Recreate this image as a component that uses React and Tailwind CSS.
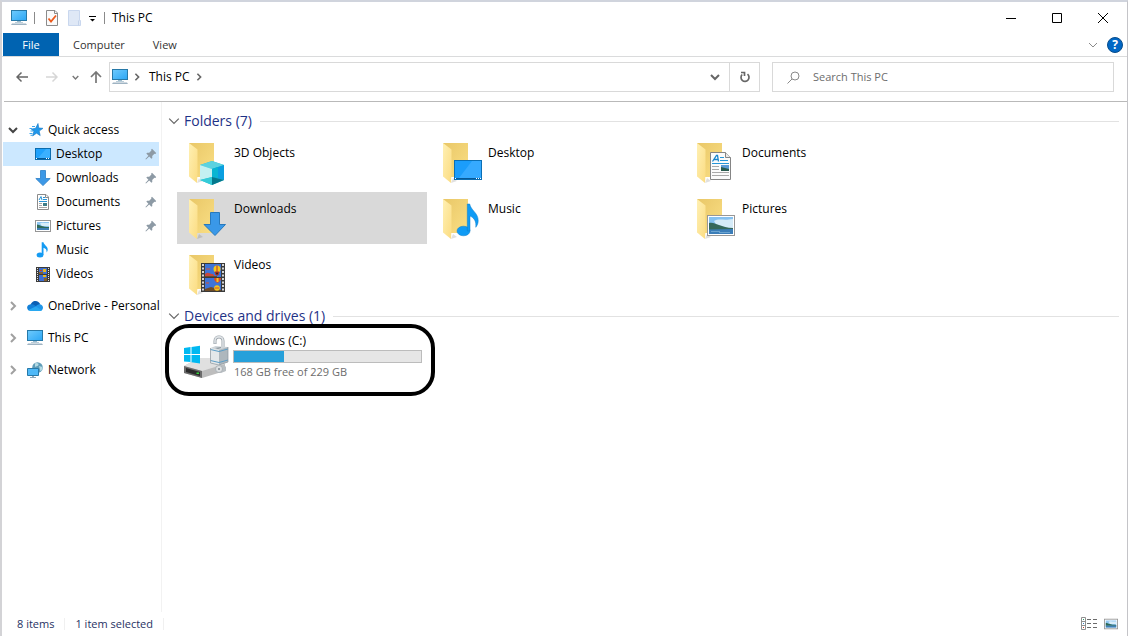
import React from "react";

/* ---------- small icons ---------- */

function Chevron({ dir = "down", className = "" }) {
  const d = dir === "down" ? "M1 3 5 7 9 3" : "M3 1 7 5 3 9";
  return (
    <svg viewBox="0 0 10 10" fill="none" stroke="currentColor" className={`shrink-0 ${className}`} aria-hidden="true">
      <path d={d} />
    </svg>
  );
}

function PcIcon() {
  return (
    <svg viewBox="0 0 16 16" className="w-4 h-4 shrink-0" aria-hidden="true">
      <defs>
        <linearGradient id="pc" x1="0" y1="0" x2="1" y2="1">
          <stop offset="0" stopColor="#6fcbfd" />
          <stop offset="1" stopColor="#2ba6f5" />
        </linearGradient>
      </defs>
      <rect x="0.5" y="0.5" width="15" height="10" fill="url(#pc)" stroke="#2779a8" />
      <path d="M6 11h4v1H6z" fill="#9dbccd" />
      <path d="M4 12h8v1H4z" fill="#b9cdd9" />
      <path d="M1 13.5h14l1 1.5H0z" fill="#9fb4c3" />
    </svg>
  );
}

function StarIcon() {
  return (
    <svg viewBox="0 0 16 16" className="w-4 h-4 shrink-0" aria-hidden="true">
      <path d="M10 1.5 10.8 6 15 6.3 11.2 9.1 12.2 13.6 8.5 11.2 4.6 14 5.8 9.6 3.4 7.1 7.6 6.3z" fill="#1f97ea" stroke="#1579c4" strokeWidth="0.6" />
      <path d="M4 4.5h3M1.5 6.5H4M2.5 9H5M1.5 11.5h3M2.5 13.3h2" stroke="#3ba5ec" />
    </svg>
  );
}

function DesktopIcon() {
  return (
    <svg viewBox="0 0 16 16" className="w-4 h-4 shrink-0" aria-hidden="true">
      <rect x="0.5" y="2.5" width="15" height="11" fill="#1fa1fc" stroke="#0b6cae" />
      <path d="M3 12 11 3h4v9z" fill="#3bb0ff" />
      <path d="M1 12.5h14" stroke="#075a98" />
      <path d="M1 12.5h1M11 12.5h1M13 12.5h1" stroke="#fff" />
    </svg>
  );
}

function DownloadIcon() {
  return (
    <svg viewBox="0 0 16 16" className="w-4 h-4 shrink-0" aria-hidden="true">
      <path d="M5.5.5h5v8h4.7L8 15.6.8 8.5h4.7z" fill="#3c98e6" stroke="#2a7dc6" strokeWidth="0.8" />
    </svg>
  );
}

function DocumentIcon() {
  return (
    <svg viewBox="0 0 16 16" className="w-4 h-4 shrink-0" aria-hidden="true">
      <path d="M2.5.5H11L13.5 3v12.5h-11z" fill="#fff" stroke="#8b8b8b" />
      <path d="M10.5.5v3h3" fill="none" stroke="#8b8b8b" />
      <path d="M4 6 6 2.5 7 6M8 3.5h2M8 5.5h4M4 7.5h8" fill="none" stroke="#2793d6" />
      <path d="M4 9.5h3M4 11.5h3M4 13.5h8" stroke="#a5a5a5" />
      <path d="M8 9h4v3H8z" fill="#3d7d88" />
    </svg>
  );
}

function PictureIcon({ className = "w-4 h-4" }) {
  return (
    <svg viewBox="0 0 16 16" className={`shrink-0 ${className}`} aria-hidden="true">
      <rect x="0.5" y="2.5" width="15" height="11" fill="#fff" stroke="#969696" />
      <path d="M2 4h12v8H2z" fill="#8fc6f2" />
      <path d="M5 5.5c2-1.5 4 0 9-.5v3H7z" fill="#d9edf9" />
      <path d="M2 6.500c3 .5 5 2.500 12 2.500v1H2z" fill="#2f6a58" />
      <path d="M2 10h12v2H2z" fill="#3f7fb5" />
    </svg>
  );
}

function MusicIcon() {
  return (
    <svg viewBox="0 0 16 16" className="w-4 h-4 shrink-0" aria-hidden="true">
      <ellipse cx="5" cy="13" rx="3.4" ry="2.5" fill="#149bf3" />
      <path d="M6.700.3h1.800c.3 2.600 4.300 4 4.200 7.200 0 1.200-.4 2-1.100 2.900.3-2.600-.9-3.900-3.100-4.600V13H6.700z" fill="#149bf3" />
    </svg>
  );
}

function VideoIcon() {
  return (
    <svg viewBox="0 0 16 16" className="w-4 h-4 shrink-0" aria-hidden="true">
      <path d="M1 1h14v15H1z" fill="#3b3b3b" />
      <path d="M2.500 2v14M13.500 2v14" stroke="#e2e2e2" strokeDasharray="1 1" />
      <path d="M4 2h8v6H4zM4 9h8v6H4z" fill="#3f6fd0" />
      <path d="M8 3h3v3H8zM8 9h3v2H8z" fill="#e9b81f" />
      <path d="M4 6h4v2H4zM9 12h3v3H9z" fill="#86602d" />
      <path d="M5 4h2v1H5z" fill="#c5402c" />
    </svg>
  );
}

function CloudIcon() {
  return (
    <svg viewBox="0 0 16 16" className="w-4 h-4 shrink-0" aria-hidden="true">
      <path d="M3 8.500C3.500 5 6 3 8.500 3c2.200 0 4 1.300 4.700 3.300L9 9z" fill="#0a5fb4" />
      <path d="M3.300 6.500C5 6 6.500 6.500 8 7.400L11 9.500 2 12.600C-1 10.500-.3 6.800 3.300 6.500z" fill="#1480d8" />
      <path d="M8.500 8.800c1-1.800 2.600-2.700 4.500-2.600 1.800.2 3 1.700 3 3.400 0 2-1.400 3.400-3.200 3.400H6z" fill="#2196e8" />
      <path d="M1.300 12 8.700 8.600 15 12.200c-.6.5-1.300.8-2.200.8H3.500c-.9 0-1.600-.3-2.200-1z" fill="#29a8f0" />
    </svg>
  );
}

function NetworkIcon() {
  return (
    <svg viewBox="0 0 16 16" className="w-4 h-4 shrink-0" aria-hidden="true">
      <circle cx="10.5" cy="5.5" r="5.3" fill="#5f9cb8" />
      <path d="M8 1.500c2-1 4 0 3.500 1.500S9 4 8 5zM12 4l3.500 1c0 2-1 4-2 4.500z" fill="#b5dbe4" />
      <path d="M.5 6.500h11v7H.5z" fill="#4fb9f8" stroke="#2779a8" />
      <path d="M5 14h2v1H5z" fill="#8fa9bb" />
      <path d="M3 15.500h6" stroke="#8fa9bb" />
    </svg>
  );
}

function PinIcon() {
  return (
    <svg viewBox="0 0 12 12" className="w-3 h-3 shrink-0 text-[#8d9aa5]" aria-hidden="true">
      <path d="M7 .8 11.200 5l-.8.9-1-.2-2.200 2.200.1 2-.9.9L4.200 8.600 1 11.600l-.6-.6L3.400 7.800 1.300 5.600l.9-.9 2 .1L6.400 2.600l-.2-1z" fill="currentColor" />
    </svg>
  );
}

/* ---------- 48px tile icons ---------- */

function Folder({ children }) {
  return (
    <svg viewBox="0 0 48 48" className="w-12 h-12 shrink-0" aria-hidden="true">
      <defs>
        <linearGradient id="fback" x1="0" y1="0" x2="1" y2="1">
          <stop offset="0" stopColor="#e9c767" />
          <stop offset="1" stopColor="#fadf85" />
        </linearGradient>
        <linearGradient id="fflap" x1="0" y1="0" x2="1" y2="1">
          <stop offset="0" stopColor="#fff0b3" />
          <stop offset="1" stopColor="#fbdc82" />
        </linearGradient>
      </defs>
      <path d="M16 45l6-2-4-3z" fill="#000" opacity="0.12" />
      <path d="M8 5h25v34H14z" fill="url(#fback)" />
      <path d="M8 5l8.500 6.500v24L16 45l-8-6.500z" fill="url(#fflap)" />
      {children}
    </svg>
  );
}

function ObjectsFolder() {
  return (
    <Folder>
      <path d="M17 39h28l-3 4-11 4-12-5z" fill="#fff" opacity="0.8" />
      <path d="M31 23l12 4v15l-12 5-12-5V27z" fill="#23bfd3" />
      <path d="M31 23l12 4-12 4-12-4z" fill="#5bd2e0" />
      <path d="M19 27l12 4v8l-12 3z" fill="#c4f0f2" />
      <path d="M31 31l12-4v15l-12-3z" fill="#0a9fe0" />
      <path d="M31 31l6-2v11l-6-1z" fill="#08b5d2" />
      <path d="M31 39l12 3-12 5z" fill="#05788c" />
      <path d="M19 42l12-3v8z" fill="#35cbd8" />
    </Folder>
  );
}

function DesktopFolder() {
  return (
    <Folder>
      <rect x="19.5" y="22.5" width="27" height="19" fill="#1b9dfb" stroke="#0b6fb5" />
      <path d="M24 40 37 23h9v17z" fill="#36aaff" />
      <path d="M20 40.500h26" stroke="#075a98" />
      <path d="M20 40.500h1M41 40.500h1M43 40.500h1M45 40.500h1" stroke="#fff" />
    </Folder>
  );
}

function DocumentsFolder() {
  return (
    <Folder>
      <path d="M21.500 14.500h15l5 5v22h-20z" fill="#fbfbfb" stroke="#858585" />
      <path d="M36.500 14.500v5h5" fill="#e9e9e9" stroke="#858585" />
      <path d="M23.500 23.500l4-6h1l1 6M25 21.500h4" fill="none" stroke="#1886cd" strokeWidth="1.3" />
      <path d="M31 19.500h4M31 22.500h8M23 25.500h17" stroke="#2796d9" />
      <path d="M23 28.500h7M23 31.500h7M23 34.500h17M23 37.500h17" stroke="#a9a9a9" />
      <path d="M32 27h8v6h-8z" fill="#5c9bd6" />
      <path d="M32 29l8 2v2h-8z" fill="#285a4e" />
    </Folder>
  );
}

function DownloadsFolder() {
  return (
    <Folder>
      <path d="M29.500 18.500h9v12h6L34 41.500 23 30.500h6.500z" fill="#3a98e8" stroke="#2779bd" />
    </Folder>
  );
}

function MusicFolder() {
  return (
    <Folder>
      <ellipse cx="28.5" cy="37" rx="6.5" ry="4.8" fill="#0f9bf5" stroke="#0c7fcb" strokeWidth="0.5" />
      <path d="M32.300 10h2.400c1 6 8.500 9 8.500 16.500 0 2.800-.8 4.700-2.400 6.800.6-5.800-1.500-9.300-5.800-11.300V37h-2.700z" fill="#0f9bf5" stroke="#0c7fcb" strokeWidth="0.5" />
    </Folder>
  );
}

function PicturesFolder() {
  return (
    <Folder>
      <rect x="18.5" y="21.5" width="27" height="20" fill="#fff" stroke="#979797" />
      <path d="M20 23h24v17H20z" fill="#85c1f0" />
      <path d="M25 27c5-3 9 0 19-2v9H29z" fill="#d5ebf8" />
      <path d="M20 29c4-1 6 1 10 2s8 3 14 3v2H20z" fill="#35685a" />
      <path d="M20 35.500l24-.5v5H20z" fill="#3b7db8" />
      <path d="M22 37.500h9M30 38.500h11" stroke="#79aed6" strokeWidth="0.8" />
    </Folder>
  );
}

function VideosFolder() {
  return (
    <Folder>
      <path d="M20 13h24v29H20z" fill="#3a3a3a" />
      <path d="M22 14v28M42 14v28" stroke="#d6d6d6" strokeWidth="2" strokeDasharray="2 1.5" />
      <path d="M24 14h16v13H24zM24 28h16v13H24z" fill="#3e74d6" />
      <path d="M24 24c3-3 5 0 8 0l2 3H24z" fill="#c8483d" />
      <path d="M24 26h12v1H24zM24 39l6-2 10 3v1H24z" fill="#6d4b27" />
      <circle cx="36" cy="19" r="3.5" fill="#f3c51c" />
      <path d="M36 15.500v7M34 22h4l-1 3h-2z" stroke="#bd3324" fill="#2a2a2a" />
      <path d="M33 28h7c0 3-2 4-3.500 5C35 32 33 31 33 28z" fill="#d94a28" />
      <path d="M35.500 28h2v4h-2z" fill="#efc520" />
      <circle cx="36" cy="38" r="2.8" fill="#f3c51c" />
      <path d="M25 19h4M25 33h3M34 38h4" stroke="#d9512b" />
    </Folder>
  );
}

function DriveIcon() {
  return (
    <svg viewBox="0 0 48 48" className="w-12 h-12 shrink-0" aria-hidden="true">
      <path d="M3 35 18 27h14l12 6v7L21 47 3 42z" fill="#bdbdbd" />
      <path d="M3 35 18 27h14l12 6-23 7z" fill="#e0e0e0" />
      <path d="M3 35l18 5v7L3 42z" fill="#6b6b6b" />
      <path d="M5 37l14 4v4L5 41z" fill="#2b2b2b" />
      <path d="M15.500 41.500H18V43h-2.500z" fill="#36d43b" />
      <path d="M3 17l6.500-1v7H3zM10.500 16l8.500-1.300V23h-8.500zM3 24h6.500v7L3 30.500zM10.500 24H19v8.500l-8.500-1.300z" fill="#00b8f1" />
      <path d="M34 13v-3c0-5.500 8-5.500 8 0v6" fill="none" stroke="#98a1a8" strokeWidth="3" />
      <path d="M34 12.500V10c0-5.500 8-5.500 8 0v6" fill="none" stroke="#dfe3e6" strokeWidth="1.600" />
      <path d="M29.500 17l5-2 12.500 1v15l-9 3-8.500-2z" fill="#cfd5d9" />
      <path d="M29.500 17l8.500 2v15l-8.500-2z" fill="#e4e8ea" />
      <path d="M38 19l9-3v15l-9 3z" fill="#aeb7bd" />
      <path d="M34 17l6-1v1l-3 1z" fill="#8e989f" />
      <path d="M29.500 18.500l8.500 2 9-2.500M29.500 29.500l8.500 2 9-2.500" fill="none" stroke="#5b9dc6" />
      <path d="M29.500 17v15l8.500 2 9-3V16" fill="none" stroke="#8c969e" strokeWidth="0.7" />
      <path d="M34 36l9-2 2 2v4l-5 2-6-2z" fill="#b9bfc3" />
      <circle cx="38" cy="38" r="3.5" fill="#dde0e2" stroke="#9da5ab" strokeWidth="0.7" />
      <circle cx="38" cy="38" r="1" fill="#7a848c" />
    </svg>
  );
}

/* ---------- data ---------- */

const quickItems = [
  { name: "Desktop", icon: <DesktopIcon />, pinned: true, active: true },
  { name: "Downloads", icon: <DownloadIcon />, pinned: true },
  { name: "Documents", icon: <DocumentIcon />, pinned: true },
  { name: "Pictures", icon: <PictureIcon />, pinned: true },
  { name: "Music", icon: <MusicIcon /> },
  { name: "Videos", icon: <VideoIcon /> },
];

const roots = [
  { name: "OneDrive - Personal", icon: <CloudIcon /> },
  { name: "This PC", icon: <PcIcon /> },
  { name: "Network", icon: <NetworkIcon /> },
];

const folders = [
  { name: "3D Objects", icon: <ObjectsFolder /> },
  { name: "Desktop", icon: <DesktopFolder /> },
  { name: "Documents", icon: <DocumentsFolder /> },
  { name: "Downloads", icon: <DownloadsFolder />, selected: true },
  { name: "Music", icon: <MusicFolder /> },
  { name: "Pictures", icon: <PicturesFolder /> },
  { name: "Videos", icon: <VideosFolder /> },
];

const drive = { name: "Windows (C:)", free: 168, total: 229 };

/* ---------- sections ---------- */

function TitleBar() {
  return (
    <header className="flex items-center h-[31px] pl-[9px] pr-px">
      <div className="flex items-center flex-1">
        <PcIcon />
        <span className="w-px h-3 ml-[7px] bg-[#8a8a8a]"></span>
        <button aria-label="Properties" className="ml-[9px]">
          <svg viewBox="0 0 16 16" className="w-4 h-4">
            <path d="M2.500.5H11L13.500 3v12.500h-11z" fill="#fafafa" stroke="#8b8b8b" />
            <path d="M10.500.5v3h3" fill="none" stroke="#8b8b8b" />
            <path d="M4.500 8.500 7 11.500l5-6" fill="none" stroke="#ec5a1c" strokeWidth="1.8" />
          </svg>
        </button>
        <button aria-label="New folder" className="ml-[7px]">
          <svg viewBox="0 0 16 16" className="w-4 h-4">
            <path d="M1.500.5h11v10h1v5h-12z" fill="#dfe8f6" stroke="#c9d7ee" />
            <path d="M11.500 10.500v5" stroke="#c3d2ea" />
          </svg>
        </button>
        <button aria-label="Customize Quick Access Toolbar" className="ml-[5px]">
          <svg viewBox="0 0 10 10" className="w-[10px] h-[10px]">
            <path d="M1 3.500h7" stroke="#000" />
            <path d="M2 6h5L4.500 8.500z" fill="#000" />
          </svg>
        </button>
        <span className="w-px h-3 ml-[6px] bg-[#8a8a8a]"></span>
        <h1 className="ml-[7px]">This PC</h1>
      </div>
      <button aria-label="Minimize" className="flex items-center justify-center w-[46px] h-full">
        <svg viewBox="0 0 10 10" className="w-[10px] h-[10px]" stroke="#000"><path d="M0 5.500h10" /></svg>
      </button>
      <button aria-label="Maximize" className="flex items-center justify-center w-[46px] h-full">
        <svg viewBox="0 0 10 10" className="w-[10px] h-[10px]" stroke="#000" fill="none"><path d="M.5.5h9v9h-9z" /></svg>
      </button>
      <button aria-label="Close" className="flex items-center justify-center w-[46px] h-full">
        <svg viewBox="0 0 10 10" className="w-[10px] h-[10px]" stroke="#000"><path d="M0 0l10 10M10 0 0 10" /></svg>
      </button>
    </header>
  );
}

function Ribbon() {
  return (
    <nav className="flex items-center h-6 pl-px pr-1 border-b border-[#dadbdc] text-[11px]">
      <button className="w-14 h-full bg-[#0063b1] text-white">File</button>
      <button className="ml-[14px] text-[#333]">Computer</button>
      <button className="ml-7 text-[#333]">View</button>
      <span className="flex-1"></span>
      <button aria-label="Expand the Ribbon" className="mr-[9px]">
        <Chevron className="w-[10px] h-[10px] text-[#8a8a8a]" />
      </button>
      <button aria-label="Help" className="flex items-center justify-center w-4 h-4 rounded-full bg-[#0067c5] border border-[#084d8c] text-[12px] text-white font-bold">
        ?
      </button>
    </nav>
  );
}

function AddressRow() {
  return (
    <div className="flex items-center h-[45px] ml-[2px] pl-3 pr-[13px] pb-2 pt-1 border-b border-[#b9b9b9]">
      <button aria-label="Back" className="text-[#666]">
        <svg viewBox="0 0 12 12" className="w-3 h-3" fill="none" stroke="currentColor" strokeWidth="1.5"><path d="M12 6H1M5.500 1.500 1 6l4.500 4.500" /></svg>
      </button>
      <button aria-label="Forward" className="ml-[18px] text-[#d6d6d6]">
        <svg viewBox="0 0 12 12" className="w-3 h-3" fill="none" stroke="currentColor" strokeWidth="1.5"><path d="M0 6h11M6.500 1.500 11 6l-4.500 4.500" /></svg>
      </button>
      <button aria-label="Recent locations" className="ml-[14px] text-[#777]">
        <Chevron className="w-[7px] h-[7px] stroke-2" />
      </button>
      <button aria-label="Up" className="ml-[11px] text-[#777]">
        <svg viewBox="0 0 12 12" className="w-3 h-3" fill="none" stroke="currentColor" strokeWidth="1.7"><path d="M6 12V1M1 6l5-5 5 5" /></svg>
      </button>

      <div className="flex items-center flex-1 h-[30px] ml-[7px] pl-[2px] border border-[#d9d9d9]">
        <PcIcon />
        <Chevron dir="right" className="ml-[5px] w-2 h-2 text-[#666] stroke-2" />
        <button className="ml-2">This PC</button>
        <Chevron dir="right" className="ml-[5px] w-2 h-2 text-[#666] stroke-2" />
        <span className="flex-1"></span>
        <button aria-label="Previous locations" className="px-[9px] text-[#666]">
          <Chevron className="w-[10px] h-[10px] stroke-2" />
        </button>
        <button aria-label="Refresh" className="flex items-center justify-center w-[30px] h-full border-l border-[#d9d9d9] text-[#666]">
          <svg viewBox="0 0 12 12" className="w-3 h-3" fill="none" stroke="currentColor" strokeWidth="1.7">
            <path d="M8.500 3.200A4 4 0 1 1 3.200 3.500M2 1.500h3.500V5" />
          </svg>
        </button>
      </div>

      <label className="flex items-center w-[342px] h-[30px] ml-3 pl-[14px] border border-[#d9d9d9]">
        <svg viewBox="0 0 13 13" className="w-[13px] h-[13px] shrink-0" fill="none" stroke="#8a8a8a" aria-hidden="true">
          <circle cx="8" cy="5" r="4" />
          <path d="M5 8 .5 12.500" />
        </svg>
        <input type="text" aria-label="Search This PC" placeholder="Search This PC" className="flex-1 min-w-0 ml-[13px] text-[11px] outline-none placeholder:text-[#6d6d6d]" />
      </label>
    </div>
  );
}

function Sidebar() {
  return (
    <aside className="w-[160px] shrink-0 pt-4 pl-px pr-[2px] border-r border-[#f2f2f2]">
      <button className="flex items-center w-full h-6 pl-[5px]">
        <Chevron className="w-[10px] h-[10px] text-[#444] stroke-2" />
        <span className="ml-[10px]"><StarIcon /></span>
        <span className="ml-1">Quick access</span>
      </button>
      <ul>
        {quickItems.map((item) => (
          <li key={item.name}>
            <button className={`flex items-center w-full h-6 pl-8 pr-[2px] ${item.active ? "bg-[#cce8ff]" : ""}`}>
              {item.icon}
              <span className="flex-1 ml-[5px] text-left">{item.name}</span>
              {item.pinned && <PinIcon />}
            </button>
          </li>
        ))}
      </ul>
      {roots.map((item) => (
        <button key={item.name} className="flex items-center w-full h-6 mt-2 pl-[5px] whitespace-nowrap">
          <Chevron dir="right" className="w-[10px] h-[10px] text-[#a0a0a0] stroke-2" />
          <span className="ml-[9px]">{item.icon}</span>
          <span className="ml-[5px]">{item.name}</span>
        </button>
      ))}
    </aside>
  );
}

function GroupHeader({ title }) {
  return (
    <h2 className="flex items-center h-6 text-[14px] text-[#1e3287]">
      <Chevron className="w-3 h-3 text-[#666]" />
      <span className="ml-1">{title}</span>
      <span className="flex-1 h-px ml-2 bg-[#e2e2e2]"></span>
    </h2>
  );
}

function Content() {
  const used = ((drive.total - drive.free) / drive.total) * 100;
  return (
    <main className="flex-1 pt-[7px] pl-[6px] pr-2">
      <GroupHeader title="Folders (7)" />
      <div className="flex flex-wrap gap-1 mt-[3px] pl-[9px]">
        {folders.map((f) => (
          <button key={f.name} className={`flex items-start w-[250px] h-[52px] pl-1 pt-[2px] ${f.selected ? "bg-[#d9d9d9]" : ""}`}>
            {f.icon}
            <span className="ml-[5px] mt-[7px]">{f.name}</span>
          </button>
        ))}
      </div>

      <div className="mt-1">
        <GroupHeader title="Devices and drives (1)" />
      </div>
      <button className="relative flex items-start w-[250px] h-[52px] ml-[9px] mt-[3px] pl-1 text-left">
        <DriveIcon />
        <span className="flex-1 ml-1 mr-[5px] mt-[2px]">
          <span className="block ml-px leading-4">{drive.name}</span>
          <span className="block h-[13px] mt-px border border-[#bcbcbc] bg-[#e6e6e6]">
            <span className="block h-full bg-[#26a0da]" style={{ width: `${used}%` }}></span>
          </span>
          <span className="block ml-px mt-px text-[11px] leading-4 text-[#6d6d6d]">
            {drive.free} GB free of {drive.total} GB
          </span>
        </span>
        {/* highlight drawn around the drive */}
        <span className="absolute -left-3 -right-2 -top-[7px] -bottom-[13px] border-4 border-black rounded-3xl pointer-events-none"></span>
      </button>
    </main>
  );
}

function StatusBar() {
  return (
    <footer className="flex items-center h-6 pl-[15px] pr-[9px] text-[11px] text-[#1f3263]">
      <span>8 items</span>
      <span className="w-px h-3 mx-[10px] bg-[#f0f0f0]"></span>
      <span>1 item selected</span>
      <span className="w-px h-3 ml-[10px] bg-[#f0f0f0]"></span>
      <span className="flex-1"></span>
      <button aria-label="Details view">
        <svg viewBox="0 0 16 14" className="w-4 h-[14px]" fill="none">
          <path d="M.5.5h4v12h-4zM.5 4.500h4M.5 8.500h4" stroke="#8f8f8f" />
          <path d="M6 2.500h4M12 2.500h4M6 6.500h4M12 6.500h4M6 10.500h4M12 10.500h4" stroke="#6b6b6b" />
          <path d="M2 2.500h1" stroke="#2e9e68" />
          <path d="M2 6.500h1" stroke="#3b82c4" />
          <path d="M2 10.500h1" stroke="#c43b2e" />
        </svg>
      </button>
      <button aria-label="Large icons view" className="ml-[7px]">
        <PictureIcon className="w-[14px] h-[14px]" />
      </button>
    </footer>
  );
}

function App() {
  return (
    <div className="flex flex-col min-h-screen bg-white border-t-2 border-l-2 border-r border-t-[#d0d4dd] border-l-[#d3d3d6] border-r-[#c4c4c8] font-['Open_Sans','Noto_Sans',sans-serif] text-[12px] leading-4 text-black">
      <TitleBar />
      <Ribbon />
      <AddressRow />
      <div className="flex flex-1">
        <Sidebar />
        <Content />
      </div>
      <StatusBar />
    </div>
  );
}

export default App;
